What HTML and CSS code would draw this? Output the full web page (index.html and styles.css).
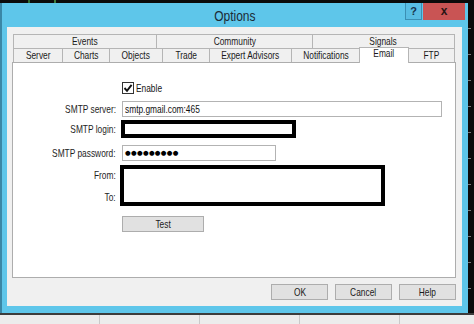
FILE: index.html
```html
<!DOCTYPE html>
<html>
<head>
<meta charset="utf-8">
<link rel="stylesheet" href="styles.css">
</head>
<body>
<div class="screen">
  <div class="top-strip"></div>
  <div class="main">
    <div class="window">
      <div class="titlebar">
        <div class="title"><span class="t">Options</span></div>
        <div class="caption">
          <div class="btn-help">?</div>
          <div class="btn-close">x</div>
        </div>
      </div>
      <div class="client">
        <div class="tabs">
          <div class="tab-row">
            <div class="tab w-events"><span class="t">Events</span></div>
            <div class="tab w-community"><span class="t">Community</span></div>
            <div class="tab w-signals last"><span class="t">Signals</span></div>
          </div>
          <div class="tab-row">
            <div class="tab w-server"><span class="t">Server</span></div>
            <div class="tab w-charts"><span class="t">Charts</span></div>
            <div class="tab w-objects"><span class="t">Objects</span></div>
            <div class="tab w-trade"><span class="t">Trade</span></div>
            <div class="tab w-expert"><span class="t">Expert Advisors</span></div>
            <div class="tab w-notif"><span class="t">Notifications</span></div>
            <div class="tab w-email selected"><span class="t">Email</span></div>
            <div class="tab w-ftp last"><span class="t">FTP</span></div>
          </div>
        </div>
        <div class="panel">
          <div class="form-row row-enable">
            <div class="label"></div>
            <div class="field check-field">
              <span class="checkbox"><svg width="10" height="10" viewBox="0 0 10 10"><path d="M1.5 5 L4 7.8 L8.6 1.8" fill="none" stroke="#111" stroke-width="1.9"/></svg></span>
              <span class="t tl">Enable</span>
            </div>
          </div>
          <div class="form-row row-server">
            <div class="label"><span class="t tr">SMTP server:</span></div>
            <div class="field"><div class="input input-server"><span class="t tl">smtp.gmail.com:465</span></div></div>
          </div>
          <div class="form-row row-login">
            <div class="label"><span class="t tr">SMTP login:</span></div>
            <div class="field"><div class="redact redact-login"></div></div>
          </div>
          <div class="form-row row-password">
            <div class="label"><span class="t tr">SMTP password:</span></div>
            <div class="field"><div class="input input-password"><span class="dots">●●●●●●●●●</span></div></div>
          </div>
          <div class="form-row row-fromto">
            <div class="label label-stack"><span class="t tr lbl-from">From:</span><span class="t tr lbl-to">To:</span></div>
            <div class="field"><div class="redact redact-fromto"></div></div>
          </div>
          <div class="form-row row-test">
            <div class="label"></div>
            <div class="field"><div class="button btn-test"><span class="t">Test</span></div></div>
          </div>
        </div>
        <div class="dialog-buttons">
          <div class="button btn-dialog"><span class="t">OK</span></div>
          <div class="button btn-dialog"><span class="t">Cancel</span></div>
          <div class="button btn-dialog"><span class="t">Help</span></div>
        </div>
      </div>
    </div>
    <div class="right-strip"></div>
  </div>
  <div class="bottom-strip"></div>
</div>
</body>
</html>
```

FILE: styles.css
```css
* { box-sizing: border-box; }
html, body { margin: 0; padding: 0; }
body {
  width: 474px;
  height: 324px;
  overflow: hidden;
  background: #0b0b0b;
  font-family: "Liberation Sans", Arial, sans-serif;
  font-size: 11px;
  color: #151515;
}
/* glyphs of the original UI font are narrow: compress horizontally */
.t {
  display: inline-block;
  white-space: nowrap;
  transform: scaleX(0.76);
  transform-origin: center center;
}
.t.tl { transform-origin: left center; }
.t.tr { transform-origin: right center; }
.screen { display: flex; flex-direction: column; width: 474px; height: 324px; }
.top-strip {
  height: 3px;
  background: linear-gradient(90deg, #0b0b0b 0 28px, #2f6b2f 28px 30px, #0b0b0b 30px 54px, #3d7a3d 54px 56px, #0b0b0b 56px);
}
.main { display: flex; height: 310px; }
.window {
  width: 468px;
  height: 310px;
  background: #5ec6ea;
  border-left: 2px solid #3a87a6;
  display: flex;
  flex-direction: column;
}
.titlebar {
  height: 24px;
  display: grid;
  grid-template-columns: 1fr auto 1fr;
}
.title {
  grid-column: 2;
  align-self: center;
  font-size: 15px;
  color: #1c2b36;
}
.title .t { transform: scaleX(0.8); }
.caption {
  grid-column: 3;
  justify-self: end;
  display: flex;
  gap: 1px;
  height: 17px;
  margin-right: 3px;
}
.btn-help {
  width: 17px;
  background: #58bde3;
  border: 1px solid #3b8fb3;
  border-top: none;
  color: #17324a;
  font-weight: bold;
  font-size: 11px;
  display: flex;
  align-items: center;
  justify-content: center;
}
.btn-close {
  width: 42px;
  background: #c95454;
  color: #2a1414;
  font-weight: bold;
  font-size: 12px;
  display: flex;
  align-items: center;
  justify-content: center;
  padding-bottom: 2px;
}
.client {
  flex: 1;
  margin: 0 6px 7px 5px;
  background: #f0f0f0;
  padding: 7px 6px 6px 5px;
  display: flex;
  flex-direction: column;
}
.tabs { margin: 0 1px; height: 28px; display: flex; flex-direction: column; }
.tab-row { display: flex; height: 14px; align-items: flex-start; }
.tab {
  height: 14px;
  border: 1px solid #b5b5b5;
  border-right: none;
  border-bottom: none;
  background: #f0f0f0;
  font-size: 11px;
  line-height: 12px;
  text-align: center;
  white-space: nowrap;
  color: #1a1a1a;
  overflow: visible;
}
.tab.last { border-right: 1px solid #b5b5b5; }
.tab.selected {
  position: relative;
  z-index: 1;
  height: 16px;
  margin-top: -1px;
  background: #fff;
  border-right: 1px solid #b5b5b5;
  line-height: 11px;
}
.tab.selected + .tab { border-left: none; }
.w-events { width: 143px; }
.w-community { width: 156px; }
.w-signals { width: 143px; }
.w-server { width: 49px; }
.w-charts { width: 47px; }
.w-objects { width: 53px; }
.w-trade { width: 47px; }
.w-expert { width: 82px; }
.w-notif { width: 68px; }
.w-email { width: 50px; }
.w-ftp { width: 46px; }
.panel {
  height: 216px;
  background: #fff;
  border: 1px solid #adadad;
  padding-top: 19px;
  display: flex;
  flex-direction: column;
}
.form-row { display: flex; }
.label {
  width: 103px;
  text-align: right;
  color: #1e1e1e;
  display: flex;
  align-items: center;
  justify-content: flex-end;
  white-space: nowrap;
}
.field { margin-left: 6px; display: flex; align-items: center; }
.row-enable { height: 12px; }
.check-field { gap: 2px; }
.checkbox {
  width: 12px;
  height: 12px;
  border: 1px solid #333;
  background: #fff;
  display: flex;
  align-items: center;
  justify-content: center;
}
.row-server { margin-top: 7px; height: 16px; }
.input {
  height: 16px;
  border: 1px solid #b3b3b3;
  background: #fff;
  padding-left: 2px;
  display: flex;
  align-items: center;
  color: #111;
}
.input-server { width: 320px; }
.row-login { margin-top: 3px; height: 18px; }
.redact { border: 4px solid #000; background: #fff; }
.redact-login { width: 175px; height: 18px; margin-left: -1px; }
.row-password { margin-top: 7px; height: 16px; }
.input-password { width: 154px; }
.dots { font-family: "DejaVu Sans", sans-serif; font-size: 6.5px; letter-spacing: 0.3px; color: #000; }
.row-fromto { margin-top: 4px; height: 41px; }
.label-stack { flex-direction: column; align-items: flex-end; justify-content: flex-start; }
.lbl-from { line-height: 12px; margin-top: 4px; }
.lbl-to { line-height: 12px; margin-top: 10px; }
.row-fromto .field { align-items: stretch; }
.redact-fromto { width: 265px; height: 41px; margin-left: -2px; }
.row-test { margin-top: 10px; height: 16px; }
.button {
  height: 16px;
  background: #e1e1e1;
  border: 1px solid #adadad;
  display: flex;
  align-items: center;
  justify-content: center;
  color: #1a1a1a;
}
.btn-test { width: 82px; }
.dialog-buttons {
  margin-top: 6px;
  display: flex;
  justify-content: flex-end;
  gap: 7px;
}
.btn-dialog { width: 57px; }
.right-strip {
  width: 6px;
  height: 310px;
  background: repeating-linear-gradient(180deg, #0b0b0b 0 25px, #7a7a7a 25px 26px) left / 3px 100% no-repeat, #0b0b0b;
}
.bottom-strip {
  height: 11px;
  background:
    linear-gradient(180deg, #3c3c3c 0 2px, transparent 2px),
    repeating-linear-gradient(90deg, transparent 0 99px, #c9c9c9 99px 100px),
    #ececec;
}
```
